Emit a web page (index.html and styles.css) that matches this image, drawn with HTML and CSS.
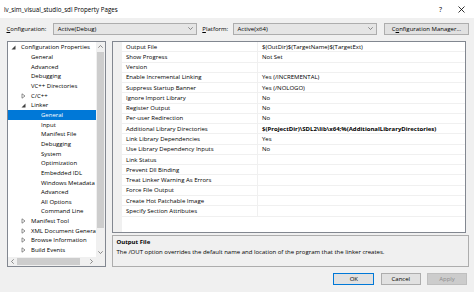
FILE: index.html
```html
<!DOCTYPE html>
<html lang="en">
<head>
    <meta charset="UTF-8">
    <title>lv_sim_visual_studio_sdl Property Pages</title>
    <link rel="stylesheet" href="styles.css">
</head>
<body>
    <div class="titlebar">
        <span class="title">lv_sim_visual_studio_sdl Property Pages</span>
        <span class="tb-btn">?</span>
        <span class="tb-btn">
            <svg width="7" height="7" viewBox="0 0 7 7"><path d="M0.5 0.5L6.5 6.5M6.5 0.5L0.5 6.5" stroke="#000" stroke-width="0.8" fill="none"/></svg>
        </span>
    </div>

    <div class="toolbar">
        <span class="label label-config"><u>C</u>onfiguration:</span>
        <div class="combo combo-config">
            <span>Active(Debug)</span>
            <svg class="chev" width="5" height="3" viewBox="0 0 5 3"><path d="M0.3 0.3L2.5 2.5L4.7 0.3" stroke="#606060" stroke-width="0.7" fill="none"/></svg>
        </div>
        <span class="label label-platform"><u>P</u>latform:</span>
        <div class="combo combo-platform">
            <span>Active(x64)</span>
            <svg class="chev" width="5" height="3" viewBox="0 0 5 3"><path d="M0.3 0.3L2.5 2.5L4.7 0.3" stroke="#606060" stroke-width="0.7" fill="none"/></svg>
        </div>
        <button class="btn btn-manager">C<u>o</u>nfiguration Manager...</button>
    </div>

    <div class="main">
        <!-- 左侧树 -->
        <div class="tree">
            <div class="tree-body">
                <ul class="tree-list">
                    <li class="lvl0"><span class="arrow"><svg width="5" height="5" viewBox="0 0 5 5"><path d="M4.5 0.5V4.5H0.5Z" fill="#404040"/></svg></span>Configuration Properties</li>
                    <li class="lvl1"><span class="arrow"></span>General</li>
                    <li class="lvl1"><span class="arrow"></span>Advanced</li>
                    <li class="lvl1"><span class="arrow"></span>Debugging</li>
                    <li class="lvl1"><span class="arrow"></span>VC++ Directories</li>
                    <li class="lvl1"><span class="arrow"><svg width="5" height="6" viewBox="0 0 5 6"><path d="M1 0.8V5.2L4 3Z" fill="none" stroke="#606060" stroke-width="0.7"/></svg></span>C/C++</li>
                    <li class="lvl1"><span class="arrow"><svg width="5" height="5" viewBox="0 0 5 5"><path d="M4.5 0.5V4.5H0.5Z" fill="#404040"/></svg></span>Linker</li>
                    <li class="lvl2 selected"><span class="arrow"></span>General</li>
                    <li class="lvl2"><span class="arrow"></span>Input</li>
                    <li class="lvl2"><span class="arrow"></span>Manifest File</li>
                    <li class="lvl2"><span class="arrow"></span>Debugging</li>
                    <li class="lvl2"><span class="arrow"></span>System</li>
                    <li class="lvl2"><span class="arrow"></span>Optimization</li>
                    <li class="lvl2"><span class="arrow"></span>Embedded IDL</li>
                    <li class="lvl2"><span class="arrow"></span>Windows Metadata</li>
                    <li class="lvl2"><span class="arrow"></span>Advanced</li>
                    <li class="lvl2"><span class="arrow"></span>All Options</li>
                    <li class="lvl2"><span class="arrow"></span>Command Line</li>
                    <li class="lvl1"><span class="arrow"><svg width="5" height="6" viewBox="0 0 5 6"><path d="M1 0.8V5.2L4 3Z" fill="none" stroke="#606060" stroke-width="0.7"/></svg></span>Manifest Tool</li>
                    <li class="lvl1"><span class="arrow"><svg width="5" height="6" viewBox="0 0 5 6"><path d="M1 0.8V5.2L4 3Z" fill="none" stroke="#606060" stroke-width="0.7"/></svg></span>XML Document Generator</li>
                    <li class="lvl1"><span class="arrow"><svg width="5" height="6" viewBox="0 0 5 6"><path d="M1 0.8V5.2L4 3Z" fill="none" stroke="#606060" stroke-width="0.7"/></svg></span>Browse Information</li>
                    <li class="lvl1"><span class="arrow"><svg width="5" height="6" viewBox="0 0 5 6"><path d="M1 0.8V5.2L4 3Z" fill="none" stroke="#606060" stroke-width="0.7"/></svg></span>Build Events</li>
                </ul>
                <div class="vscroll">
                    <div class="sb-btn"><svg width="5" height="3" viewBox="0 0 5 3"><path d="M0.3 2.7L2.5 0.5L4.7 2.7" stroke="#606060" stroke-width="0.7" fill="none"/></svg></div>
                    <div class="vtrack"><div class="vthumb"></div></div>
                    <div class="sb-btn"><svg width="5" height="3" viewBox="0 0 5 3"><path d="M0.3 0.3L2.5 2.5L4.7 0.3" stroke="#606060" stroke-width="0.7" fill="none"/></svg></div>
                </div>
            </div>
            <div class="hscroll">
                <div class="sb-btn"><svg width="3" height="5" viewBox="0 0 3 5"><path d="M2.7 0.3L0.5 2.5L2.7 4.7" stroke="#606060" stroke-width="0.7" fill="none"/></svg></div>
                <div class="htrack"><div class="hthumb"></div></div>
                <div class="sb-btn"><svg width="3" height="5" viewBox="0 0 3 5"><path d="M0.3 0.3L2.5 2.5L0.3 4.7" stroke="#606060" stroke-width="0.7" fill="none"/></svg></div>
                <div class="corner"></div>
            </div>
        </div>

        <!-- 右侧属性表 -->
        <div class="right">
            <div class="grid">
                <div class="gutter"></div>
                <div class="props">
                    <div class="prop-row"><span class="name">Output File</span><span class="value">$(OutDir)$(TargetName)$(TargetExt)</span></div>
                    <div class="prop-row"><span class="name">Show Progress</span><span class="value">Not Set</span></div>
                    <div class="prop-row"><span class="name">Version</span><span class="value"></span></div>
                    <div class="prop-row"><span class="name">Enable Incremental Linking</span><span class="value">Yes (/INCREMENTAL)</span></div>
                    <div class="prop-row"><span class="name">Suppress Startup Banner</span><span class="value">Yes (/NOLOGO)</span></div>
                    <div class="prop-row"><span class="name">Ignore Import Library</span><span class="value">No</span></div>
                    <div class="prop-row"><span class="name">Register Output</span><span class="value">No</span></div>
                    <div class="prop-row"><span class="name">Per-user Redirection</span><span class="value">No</span></div>
                    <div class="prop-row"><span class="name">Additional Library Directories</span><span class="value bold">$(ProjectDir)\SDL2\lib\x64;%(AdditionalLibraryDirectories)</span></div>
                    <div class="prop-row"><span class="name">Link Library Dependencies</span><span class="value">Yes</span></div>
                    <div class="prop-row"><span class="name">Use Library Dependency Inputs</span><span class="value">No</span></div>
                    <div class="prop-row"><span class="name">Link Status</span><span class="value"></span></div>
                    <div class="prop-row"><span class="name">Prevent Dll Binding</span><span class="value"></span></div>
                    <div class="prop-row"><span class="name">Treat Linker Warning As Errors</span><span class="value"></span></div>
                    <div class="prop-row"><span class="name">Force File Output</span><span class="value"></span></div>
                    <div class="prop-row"><span class="name">Create Hot Patchable Image</span><span class="value"></span></div>
                    <div class="prop-row"><span class="name">Specify Section Attributes</span><span class="value"></span></div>
                </div>
            </div>
            <div class="desc">
                <div class="desc-title">Output File</div>
                <div class="desc-text">The /OUT option overrides the default name and location of the program that the linker creates.</div>
            </div>
        </div>
    </div>

    <div class="footer">
        <button class="btn btn-ok">OK</button>
        <button class="btn btn-cancel">Cancel</button>
        <button class="btn btn-apply" disabled>Apply</button>
    </div>
</body>
</html>
```

FILE: styles.css
```css
* {
    box-sizing: border-box;
}
body {
    margin: 0;
    width: 474px;
    height: 292px;
    overflow: hidden;
    background-color: #f0f0f0;
    font-family: "Open Sans", "Noto Sans", sans-serif;
    font-size: 6px;
    color: #000;
}
u {
    text-decoration-thickness: 0.5px;
    text-underline-offset: 1px;
}
.titlebar {
    height: 18px;
    background-color: #fff;
    display: flex;
    align-items: center;
    padding-left: 4px;
    padding-right: 2px;
}
.title {
    flex: 1;
    font-size: 6.2px;
}
.tb-btn {
    width: 21px;
    height: 18px;
    display: flex;
    align-items: center;
    justify-content: center;
    font-size: 7px;
}
.toolbar {
    height: 22.5px;
    display: flex;
    align-items: flex-start;
    padding: 4.5px 0 0 6.5px;
}
.label {
    height: 12px;
    display: flex;
    align-items: center;
}
.label-config {
    width: 46.8px;
}
.label-platform {
    width: 30.7px;
    margin-left: 5.6px;
}
.combo {
    height: 12px;
    background-color: #e5e5e5;
    border: 1px solid #adadad;
    display: flex;
    align-items: center;
    justify-content: space-between;
    padding: 0 3px 0 3.5px;
}
.combo-config {
    width: 143.4px;
}
.combo-platform {
    width: 144px;
}
.btn {
    font-family: inherit;
    font-size: 6px;
    color: #000;
    background-color: #e1e1e1;
    border: 1px solid #adadad;
    padding: 0;
    height: 12.6px;
}
.btn-manager {
    width: 85px;
    height: 12px;
    margin-left: 7px;
}
.main {
    height: 226.5px;
    display: flex;
    padding-left: 6.5px;
}
.tree {
    width: 99.5px;
    border: 1px solid #828790;
    background-color: #fff;
    display: flex;
    flex-direction: column;
}
.tree-body {
    flex: 1;
    display: flex;
    min-height: 0;
}
.tree-list {
    flex: 1;
    list-style: none;
    margin: 0;
    padding: 1px 0 0;
    overflow: hidden;
}
.tree-list li {
    height: 9.67px;
    display: flex;
    align-items: center;
    white-space: nowrap;
    overflow: hidden;
}
.tree-list .lvl0 { padding-left: 2px; }
.tree-list .lvl1 { padding-left: 12px; }
.tree-list .lvl2 { padding-left: 22px; }
.arrow {
    width: 11.5px;
    flex-shrink: 0;
    display: flex;
    align-items: center;
    padding-left: 1.5px;
}
.tree-list .selected {
    background-color: #0078d7;
    color: #fff;
}
.vscroll {
    width: 9px;
    background-color: #f0f0f0;
    display: flex;
    flex-direction: column;
}
.sb-btn {
    width: 9px;
    height: 9px;
    flex-shrink: 0;
    display: flex;
    align-items: center;
    justify-content: center;
}
.vtrack {
    flex: 1;
    padding: 1.5px 1px 0;
}
.vthumb {
    height: 176px;
    background-color: #cdcdcd;
}
.hscroll {
    height: 9px;
    display: flex;
    background-color: #f0f0f0;
}
.htrack {
    flex: 1;
    padding: 1px 0;
}
.hthumb {
    width: 63.5px;
    height: 7px;
    background-color: #cdcdcd;
}
.corner {
    width: 9px;
    background-color: #f0f0f0;
}
.right {
    width: 357px;
    margin-left: 6px;
    display: flex;
    flex-direction: column;
}
.grid {
    width: 354px;
    height: 192.2px;
    border: 1px solid #828790;
    background-color: #fff;
    display: flex;
}
.gutter {
    width: 9px;
    background-color: #f0f0f0;
}
.props {
    flex: 1;
    padding-top: 0.5px;
}
.prop-row {
    height: 10.27px;
    display: flex;
    border-bottom: 1px solid #f0f0f0;
}
.name {
    width: 136px;
    padding-left: 4px;
    border-right: 1px solid #f0f0f0;
    display: flex;
    align-items: center;
    white-space: nowrap;
}
.value {
    flex: 1;
    padding-left: 4px;
    display: flex;
    align-items: center;
    white-space: nowrap;
    overflow: hidden;
}
.bold {
    font-weight: bold;
}
.desc {
    height: 31.7px;
    margin-top: 2.3px;
    border: 1px solid #adadad;
    background-color: #f0f0f0;
    padding: 1px 0 0 3.5px;
}
.desc-title {
    font-weight: bold;
    height: 10px;
    line-height: 10px;
}
.desc-text {
    height: 10px;
    line-height: 10px;
}
.footer {
    display: flex;
    justify-content: flex-end;
    gap: 6.5px;
    padding: 5.7px 7.3px 0 0;
}
.btn-ok {
    width: 41px;
    border-color: #0078d7;
}
.btn-cancel {
    width: 40px;
}
.btn-apply {
    width: 39.4px;
    background-color: #cccccc;
    border-color: #bfbfbf;
    color: #8d8d8d;
}
```
